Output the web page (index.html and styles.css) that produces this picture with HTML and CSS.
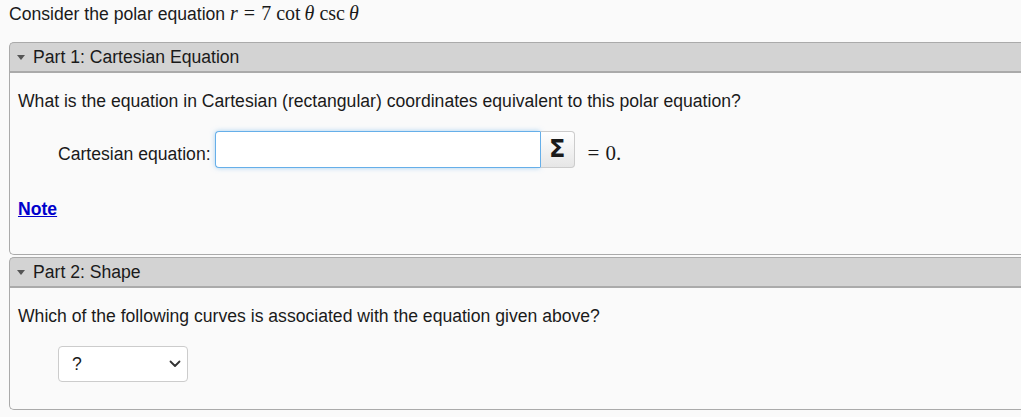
FILE: index.html
```html
<!DOCTYPE html>
<html>
<head>
<meta charset="utf-8">
<link rel="stylesheet" href="styles.css">
</head>
<body>
<div class="page">
  <p class="intro">Consider the polar equation <span class="math"><i>r</i><span class="op">=</span>7<span class="fn">cot</span><i>θ</i><span class="fn">csc</span><i>θ</i></span></p>

  <section class="panel">
    <div class="panel-head"><span class="caret"></span>Part 1: Cartesian Equation</div>
    <div class="panel-body body-1">
      <p class="question">What is the equation in Cartesian (rectangular) coordinates equivalent to this polar equation?</p>
      <div class="answer-row">
        <label class="label">Cartesian equation:</label>
        <div class="input-group">
          <input class="text-input" type="text">
          <button class="sigma"><span class="sigma-glyph">Σ</span></button>
        </div>
        <span class="math eq"><span class="op">=</span>0.</span>
      </div>
      <a class="note" href="#">Note</a>
    </div>
  </section>

  <section class="panel">
    <div class="panel-head"><span class="caret"></span>Part 2: Shape</div>
    <div class="panel-body body-2">
      <p class="question">Which of the following curves is associated with the equation given above?</p>
      <div class="select-row">
        <div class="select">
          <span>?</span>
          <svg class="chev" width="12" height="8" viewBox="0 0 12 8"><path d="M1.5 1.5 L6 6 L10.5 1.5" fill="none" stroke="#333" stroke-width="1.8" stroke-linecap="round" stroke-linejoin="round"/></svg>
        </div>
      </div>
    </div>
  </section>
</div>
</body>
</html>
```

FILE: styles.css
```css
html, body {
  margin: 0;
  padding: 0;
  background: #fafafa;
  overflow: hidden;
}
body {
  font-family: "Liberation Sans", Arial, sans-serif;
  font-size: 17.6px;
  color: #1a1a1a;
}
.page {
  padding: 0 0 0 9px;
}
.intro {
  margin: 0;
  padding-top: 3px;
  height: 39px;
  line-height: 20px;
}
.math {
  font-family: "Liberation Serif", "Times New Roman", serif;
  font-size: 20px;
}
.math i { font-style: italic; }
.op { padding: 0 6px; }
.fn { padding: 0 4px 0 5px; }
.panel {
  width: calc(100% + 40px);
  margin-bottom: 2px;
}
.panel-head {
  box-sizing: border-box;
  height: 31px;
  background: #d3d3d3;
  border-top: 1px solid #aaa;
  border-left: 1px solid #aaa;
  border-bottom: 2px solid #aaa;
  border-top-left-radius: 5px;
  display: flex;
  align-items: center;
  padding-left: 7px;
  line-height: 20px;
}
.caret {
  width: 0;
  height: 0;
  border-left: 4px solid transparent;
  border-right: 4px solid transparent;
  border-top: 5px solid #555;
  margin-right: 8px;
  margin-top: 1px;
}
.panel-body {
  box-sizing: border-box;
  border-left: 1px solid #aaa;
  border-bottom: 1px solid #aaa;
  border-bottom-left-radius: 5px;
  padding: 19px 0 0 8px;
}
.body-1 { height: 182px; }
.body-2 { height: 122px; }
.question {
  margin: 0;
  line-height: 18px;
}
.answer-row {
  display: flex;
  align-items: center;
  margin-top: 21px;
  margin-left: 40px;
}
.label {
  margin-right: 4px;
  margin-top: 10px;
}
.input-group {
  display: flex;
  height: 37px;
}
.text-input {
  box-sizing: border-box;
  width: 325px;
  height: 37px;
  border: 1px solid #66afe9;
  border-right: none;
  border-radius: 4px 0 0 4px;
  box-shadow: 0 0 5px rgba(102, 175, 233, 0.55);
  background: #fff;
  outline: none;
  margin: 0;
}
.sigma {
  box-sizing: border-box;
  width: 35px;
  height: 37px;
  margin: 0;
  border: 1px solid #ccc;
  border-left: 1px solid #66afe9;
  border-radius: 0 4px 4px 0;
  background: linear-gradient(#fff, #e6e6e6);
  display: flex;
  align-items: flex-start;
  justify-content: center;
  padding: 5px 0 0 0;
}
.sigma-glyph {
  font-family: "DejaVu Sans", sans-serif;
  font-weight: bold;
  font-size: 24px;
  line-height: 24px;
  color: #1a1a1a;
}
.eq {
  margin-left: 7px;
  margin-top: 8px;
  font-size: 21px;
}
.note {
  display: inline-block;
  margin-top: 32px;
  font-weight: bold;
  color: #0000cc;
  text-decoration: underline;
  line-height: 18px;
}
.select-row {
  margin-top: 21px;
  margin-left: 40px;
}
.select {
  box-sizing: border-box;
  width: 130px;
  height: 36px;
  border: 1px solid #ccc;
  border-radius: 4px;
  background: #fff;
  display: flex;
  align-items: center;
  justify-content: space-between;
  padding: 0 6px 0 13px;
}
.select span { line-height: 18px; }
.chev { display: block; }
```
